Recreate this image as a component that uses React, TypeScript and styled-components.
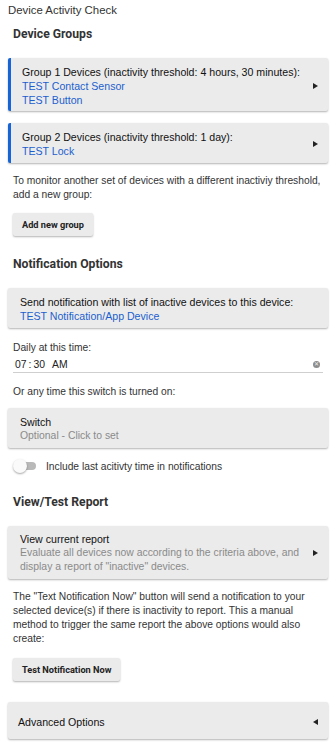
import React from "react";
import styled, { createGlobalStyle } from "styled-components";

const GlobalStyle = createGlobalStyle`
  body {
    margin: 0;
    background: #ffffff;
    font-family: "Liberation Sans", Arial, sans-serif;
    color: #222;
  }
`;

const Page = styled.div`
  width: 336px;
  box-sizing: border-box;
  padding: 2px 8px 10px 8px;
`;

const AppTitle = styled.div`
  font-size: 11.4px;
  line-height: 16px;
  color: #333;
`;

const Heading = styled.h2<{ $top: number }>`
  margin: ${(p) => p.$top}px 0 15px 0;
  padding: 0 5px;
  font-family: Roboto, "Liberation Sans", sans-serif;
  font-weight: 700;
  font-size: 12.2px;
  line-height: 18px;
  color: #333;
`;

const Card = styled.div<{ $accent?: boolean; $top?: number; $pad?: string }>`
  display: flex;
  align-items: center;
  margin-top: ${(p) => p.$top ?? 0}px;
  padding: ${(p) => p.$pad ?? "7px 0 5px 12px"};
  background: #ebebeb;
  border-left: ${(p) => (p.$accent ? "3px solid #1565d8" : "none")};
  border-radius: 2px;
  box-shadow: 0 1px 2px rgba(0, 0, 0, 0.3);
  cursor: pointer;
`;

const CardBody = styled.div`
  flex: 1;
  min-width: 0;
  font-size: 10.6px;
  line-height: 14px;
`;

const CardTitle = styled.div`
  color: #111;
`;

const CardLink = styled.div`
  color: #1b5fce;
`;

const CardHint = styled.div`
  font-size: 10.4px;
  color: #8a8a8a;
`;

const Arrow = styled.div<{ $left?: boolean }>`
  flex: none;
  width: 0;
  height: 0;
  margin: 0 10px 0 3px;
  border-top: 3px solid transparent;
  border-bottom: 3px solid transparent;
  ${(p) =>
    p.$left ? "border-right: 5px solid #222;" : "border-left: 5px solid #222;"}
`;

const Text = styled.p<{ $top: number }>`
  margin: ${(p) => p.$top}px 0 0 0;
  padding: 0 0 0 5px;
  font-size: 10.25px;
  line-height: 14px;
  color: #333;
`;

const FlatButton = styled.button<{ $top: number }>`
  display: block;
  margin: ${(p) => p.$top}px 0 0 5px;
  height: 23px;
  padding: 0 9px;
  border: none;
  border-radius: 2px;
  background: #ebebeb;
  box-shadow: 0 1px 2px rgba(0, 0, 0, 0.3);
  font-family: Roboto, "Liberation Sans", sans-serif;
  font-weight: 700;
  font-size: 9.2px;
  color: #222;
`;

const TimeRow = styled.div`
  display: flex;
  align-items: center;
  margin: 1px 5px 0 5px;
  height: 16px;
  padding-left: 2px;
  border-bottom: 1px solid #cfcfcf;
  font-size: 10.4px;
  color: #222;
`;

const TimePart = styled.span<{ $gap: number }>`
  margin-left: ${(p) => p.$gap}px;
`;

const Spacer = styled.span`
  flex: 1;
`;

const ClearIcon = styled.span`
  width: 7px;
  height: 7px;
  margin-right: 3px;
  border-radius: 50%;
  background: #8c8c8c;
  display: flex;
  align-items: center;
  justify-content: center;
  color: #eee;
  font-size: 6px;
  line-height: 1;
`;

const ToggleRow = styled.label`
  display: flex;
  align-items: center;
  gap: 10px;
  margin: 11px 0 0 5px;
  height: 14px;
  font-size: 10.25px;
  color: #333;
`;

const Track = styled.span`
  position: relative;
  width: 20px;
  height: 8px;
  margin-left: 3px;
  border-radius: 4px;
  background: #b9b9b9;
`;

const Knob = styled.span`
  position: absolute;
  left: -3px;
  top: -3px;
  width: 14px;
  height: 14px;
  border-radius: 50%;
  background: #fafafa;
  box-shadow: 0 1px 2px rgba(0, 0, 0, 0.35);
`;

export default function App() {
  return (
    <>
      <GlobalStyle />
      <Page>
        <AppTitle>Device Activity Check</AppTitle>

        <Heading $top={7}>Device Groups</Heading>
        <Card $accent $pad="7px 0 4px 11px">
          <CardBody>
            <CardTitle>Group 1 Devices (inactivity threshold: 4 hours, 30 minutes):</CardTitle>
            <CardLink>TEST Contact Sensor</CardLink>
            <CardLink>TEST Button</CardLink>
          </CardBody>
          <Arrow />
        </Card>
        <Card $accent $top={12} $pad="7px 0 5px 11px">
          <CardBody>
            <CardTitle>Group 2 Devices (inactivity threshold: 1 day):</CardTitle>
            <CardLink>TEST Lock</CardLink>
          </CardBody>
          <Arrow />
        </Card>
        <Text $top={11}>
          To monitor another set of devices with a different inactiviy threshold,
          add a new group:
        </Text>
        <FlatButton $top={11}>Add new group</FlatButton>

        <Heading $top={19}>Notification Options</Heading>
        <Card>
          <CardBody>
            <CardTitle>Send notification with list of inactive devices to this device:</CardTitle>
            <CardLink>TEST Notification/App Device</CardLink>
          </CardBody>
        </Card>
        <Text $top={13}>Daily at this time:</Text>
        <TimeRow>
          <TimePart $gap={0}>07</TimePart>
          <TimePart $gap={2}>:</TimePart>
          <TimePart $gap={2}>30</TimePart>
          <TimePart $gap={7}>AM</TimePart>
          <Spacer />
          <ClearIcon>✕</ClearIcon>
        </TimeRow>
        <Text $top={12}>Or any time this switch is turned on:</Text>
        <Card $top={9}>
          <CardBody>
            <CardTitle>Switch</CardTitle>
            <CardHint>Optional - Click to set</CardHint>
          </CardBody>
        </Card>
        <ToggleRow>
          <Track>
            <Knob />
          </Track>
          Include last acitivty time in notifications
        </ToggleRow>

        <Heading $top={20}>View/Test Report</Heading>
        <Card $pad="6px 0 5px 12px">
          <CardBody>
            <CardTitle>View current report</CardTitle>
            <CardHint>
              Evaluate all devices now according to the criteria above, and display a
              report of "inactive" devices.
            </CardHint>
          </CardBody>
          <Arrow />
        </Card>
        <Text $top={11}>
          The "Text Notification Now" button will send a notification to your
          selected device(s) if there is inactivity to report. This a manual method to
          trigger the same report the above options would also create:
        </Text>
        <FlatButton $top={12}>Test Notification Now</FlatButton>

        <Card $top={21} $pad="13px 0 10px 10px">
          <CardBody>
            <CardTitle>Advanced Options</CardTitle>
          </CardBody>
          <Arrow $left />
        </Card>
      </Page>
    </>
  );
}
